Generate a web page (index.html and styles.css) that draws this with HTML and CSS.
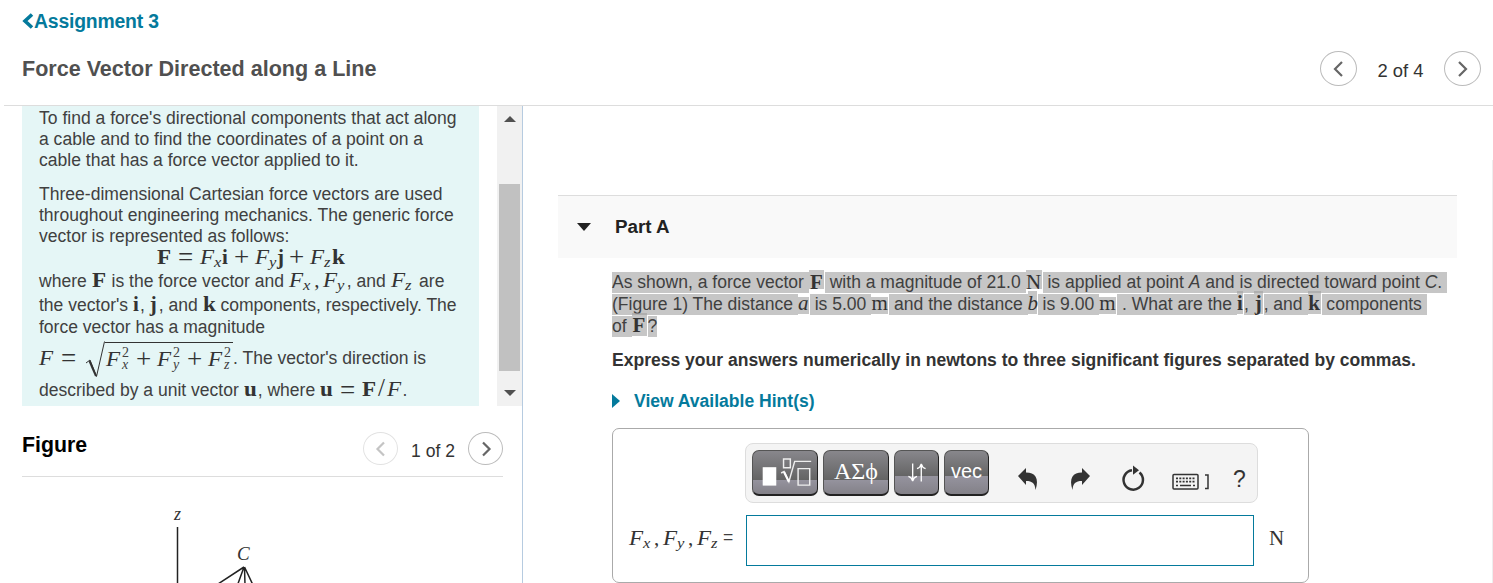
FILE: index.html
```html
<!DOCTYPE html>
<html lang="en">
<head>
  <meta charset="UTF-8">
  <meta name="viewport" content="width=device-width, initial-scale=1.0">
  <title>Force Vector Directed along a Line</title>
  <link rel="stylesheet" href="styles.css">
</head>
<body>

  <header class="top">
    <div class="top-titles">
      <a class="back" href="#"><svg width="12" height="16" viewBox="0 0 12 16"><path d="M10 1.500 3 8l7 6.500" fill="none" stroke="#047a9c" stroke-width="3.600"/></svg>Assignment 3</a>
      <h1>Force Vector Directed along a Line</h1>
    </div>
    <nav class="pager">
      <button class="round"><svg width="12" height="18" viewBox="0 0 12 18"><path d="M9 2 2 9l7 7"/></svg></button>
      <span>2 of 4</span>
      <button class="round"><svg width="12" height="18" viewBox="0 0 12 18"><path d="M2 2l7 7-7 7"/></svg></button>
    </nav>
  </header>

  <main>
    <section class="left">
      <div class="scroller">
        <div class="intro">
          <div class="line">To find a force's directional components that act along</div>
          <div class="line">a cable and to find the coordinates of a point on a</div>
          <div class="line gap">cable that has a force vector applied to it.</div>
          <div class="line">Three-dimensional Cartesian force vectors are used</div>
          <div class="line">throughout engineering mechanics. The generic force</div>
          <div class="line">vector is represented as follows:</div>
          <div class="line formula"><b class="m bf">F</b><span class="m op">=</span><i class="m fs">F<sub>x</sub></i><b class="m bi">i</b><span class="m op plus">+</span><i class="m fs">F<sub>y</sub></i><b class="m bi">j</b><span class="m op plus">+</span><i class="m fs">F<sub>z</sub></i><b class="m bk">k</b></div>
          <div class="line where">where <b class="m bf">F</b> is the force vector and <i class="m fs">F<sub>x</sub></i><span class="m comma">,</span><i class="m fs">F<sub>y</sub></i>, and <i class="m fs">F<sub>z</sub></i> are</div>
          <div class="line comps">the vector's <b class="m bi">i</b>, <b class="m bj">j</b>, and <b class="m bk">k</b> components, respectively. The</div>
          <div class="line">force vector has a magnitude</div>
          <div class="line root-line"><i class="m f">F</i><span class="m op">=</span><svg class="radical" width="20" height="38" viewBox="0 0 20 38"><path d="M1 22l4-3 6.500 16.500L19.500.500" fill="none" stroke="#333" stroke-width="1"/><path d="M4.500 20l6.500 15" stroke="#333" stroke-width="2"/></svg><span class="root"><i class="m f">F</i><span class="stack"><span>2</span><i>x</i></span><span class="m op plus">+</span><i class="m f">F</i><span class="stack"><span>2</span><i>y</i></span><span class="m op plus">+</span><i class="m f">F</i><span class="stack"><span>2</span><i>z</i></span></span><span class="rest">. The vector's direction is</span></div>
          <div class="line unit">described by a unit vector <b class="m bu">u</b>, where <b class="m bu">u</b><span class="m op">=</span><b class="m bf">F</b><span class="m slash">/</span><i class="m f">F</i>&#8202;.</div>
        </div>
        <div class="scrollbar">
          <span class="arrow up"></span>
          <span class="thumb"></span>
          <span class="arrow down"></span>
        </div>
      </div>

      <div class="figure-head">
        <h2>Figure</h2>
        <nav class="pager small">
          <button class="round off"><svg width="12" height="16" viewBox="0 0 12 16"><path d="M9 1.500 2.500 8 9 14.500"/></svg></button>
          <span>1 of 2</span>
          <button class="round"><svg width="12" height="16" viewBox="0 0 12 16"><path d="M3 1.500 9.500 8 3 14.500"/></svg></button>
        </nav>
      </div>
      <svg class="figure" width="481" height="106" viewBox="22 477 481 106">
        <text x="174" y="520" font-size="18">z</text>
        <text x="237" y="560" font-size="19">C</text>
        <g stroke="#222" stroke-width="1.500" fill="none">
          <path d="M177.500 527v60"/>
          <path d="M244 567l-26 17M244 567l-6.500 18M244.500 567l.5 18M244.500 567l8.500 18"/>
        </g>
      </svg>
    </section>

    <section class="right">
      <div class="part">
        <span class="toggle"></span>
        <h3>Part A</h3>
      </div>

      <div class="question">
        <div class="row"><span class="t">As shown, a force vector </span><b class="m q1 wf">F</b><span class="t"> with a magnitude of 21.0 </span><span class="m q1 wn">N</span><span class="t"> is applied at point <i>A</i> and is directed toward point <i>C</i>. </span></div>
        <div class="row"><span class="t">(Figure 1) The distance </span><i class="m q2 wa">a</i><span class="t"> is 5.00 </span><span class="m q2 wm">m</span><span class="t"> and the distance </span><i class="m q3 wb">b</i><span class="t"> is 9.00 </span><span class="m q2 wm">m</span><span class="t"> . What are the </span><b class="m q3 wi">i</b><span class="t">, </span><b class="m q3 wj">j</b><span class="t">, and </span><b class="m q3 wk">k</b><span class="t"> components </span></div>
        <div class="row"><span class="t">of </span><b class="m q3 wf">F</b><span class="t">?</span></div>
      </div>

      <p class="express">Express your answers numerically in newtons to three significant figures separated by commas.</p>
      <a class="hints" href="#"><span class="hint-arrow"></span>View Available Hint(s)</a>

      <div class="answer">
        <div class="toolbar">
          <button class="key"><svg width="66" height="46" viewBox="0 0 66 46"><path d="M10 17h14v19H10z" fill="#fff"/><g fill="none" stroke="#eee" stroke-width="1.500"><path d="M31.500 8.500h7v9h-7zM46.500 18.500h12v17h-12z"/><path d="M29 23l3-1.500 5 10.500L43 11h17"/></g><path d="M32 22l5 10" stroke="#fff" stroke-width="2.200"/></svg></button>
          <button class="key greek">ΑΣϕ</button>
          <button class="key narrow"><svg width="45" height="46" viewBox="0 0 45 46"><path d="M18.500 14v18M14 27.500q3.500 1 4.500 5 1-4 4.500-5M27.500 33V15M23 19.500q3.500-1 4.500-5 1 4 4.500 5" fill="none" stroke="#fff" stroke-width="1.400"/></svg></button>
          <button class="key narrow">vec</button>
          <svg class="tools" width="240" height="46" viewBox="1010 450 240 46" fill="#333">
            <path d="M1018 476l8-8v4.500c9 0 13.500 5.500 9.500 17.500-.5-6.500-3-9-9.500-9v4z"/>
            <path d="M1090 476l-8-8v4.500c-9 0-13.500 5.500-9.500 17.500.5-6.500 3-9 9.500-9v4z"/>
            <path d="M1139.500 472.500A9.700 9.700 0 1 1 1132 470.300" fill="none" stroke="#333" stroke-width="2.500"/>
            <path d="M1133 465.500l6 4.700-6 4.600z"/>
            <rect x="1173" y="474.500" width="25" height="14.500" rx="1" fill="none" stroke="#333" stroke-width="1.500"/>
            <path d="M1176 478.300h19M1176 481.700h19" stroke="#333" stroke-width="1.800" stroke-dasharray="2 1.300"/>
            <path d="M1176 485.500h2M1180 485.500h11M1193 485.500h2" stroke="#333" stroke-width="1.600"/>
            <path d="M1205 475h3v13.500h-3" fill="none" stroke="#333" stroke-width="1.500"/>
            <text x="1233" y="487" font-size="23">?</text>
          </svg>
        </div>
        <div class="entry">
          <label for="ans"><i class="m fs">F<sub>x</sub></i><span class="m comma">,</span><i class="m fs">F<sub>y</sub></i><span class="m comma">,</span><i class="m fs">F<sub>z</sub></i><span class="eq">=</span></label>
          <input id="ans" type="text">
          <span class="m newton">N</span>
        </div>
      </div>
    </section>
  </main>

</body>
</html>
```
FILE: styles.css
```css
*{
  box-sizing: border-box;
}

body{
  margin: 0;
  height: 583px;
  overflow: hidden;
  background-color: #fff;
  color: #404040;
  font-family: "Liberation Sans", Arial, sans-serif;
  font-size: 17.55px;
}

h1, h2, h3, p{
  margin: 0;
}

a{
  color: #047a9c;
  font-weight: bold;
  text-decoration: none;
}

button{
  padding: 0;
  font: inherit;
}

/* header */
.top{
  display: flex;
  justify-content: space-between;
  height: 106px;
  margin-left: 4px;
  padding: 0 12px 0 18px;
  border-bottom: 1px solid #ddd;
}

.top-titles{
  padding-top: 10px;
}

.back{
  display: flex;
  align-items: center;
  height: 23px;
  font-size: 19.4px;
  letter-spacing: -.2px;
}

.back svg{
  margin-top: -1px;
}

.top h1{
  margin-top: 23px;
  line-height: 25px;
  font-size: 21.55px;
  color: #505050;
}

.pager{
  display: flex;
  align-items: center;
  color: #333;
}

.top .pager{
  height: 35px;
  margin-top: 51px;
  font-size: 18.4px;
}

.top .pager span{
  width: 87px;
  padding-top: 5px;
  text-align: center;
}

.round{
  display: flex;
  align-items: center;
  justify-content: center;
  width: 37px;
  height: 35px;
  border: 1px solid #bbb;
  border-radius: 50%;
  background-color: #fff;
}

.round path{
  fill: none;
  stroke: #666;
  stroke-width: 2.2;
}

.round.off{
  border-color: #e2e2e2;
}

.round.off path{
  stroke: #c4c4c4;
}

main{
  display: flex;
  height: 477px;
}

/* math */
.m{
  display: inline-block;
  font-family: "Liberation Serif", "Times New Roman", serif;
  font-size: 21px;
  line-height: 20px;
  color: #333;
}

.m sub{
  position: relative;
  top: 3px;
  font-size: 15px;
  line-height: 0;
  vertical-align: baseline;
}

.f, .fs, .bf, .bk, .bu{
  transform: scaleX(1.1);
  transform-origin: left;
}

.f{ width: 14px; }
.fs{ width: 22px; }
.bf{ width: 15px; }
.bi{ width: 7px; }
.bj{ width: 9px; }
.bk{ width: 13px; }
.bu{ width: 14px; }

.comma{
  width: 11px;
  padding-left: 2px;
}

.op{
  width: 16px;
  margin: 0 6px;
  font-size: 27px;
}

.plus{
  margin: 0 5px;
}

/* left column */
.left{
  width: 523px;
  padding-left: 22px;
  border-right: 1px solid #b6cbe0;
}

.scroller{
  display: flex;
  justify-content: space-between;
  height: 300px;
}

.intro{
  width: 457px;
  padding: 2px 0 0 17px;
  background-color: #e5f6f6;
}

.line{
  height: 21px;
  line-height: 21px;
  white-space: nowrap;
}

.gap{
  margin-bottom: 13px;
}

.formula{
  display: flex;
  align-items: center;
  padding-left: 118px;
}

.formula .m{
  margin-top: -2px;
}

.where{
  height: 26px;
  line-height: 26px;
}

.where .fs{
  width: 23.5px;
}

.comps{
  height: 23px;
  line-height: 23px;
}

.root-line{
  display: flex;
  align-items: center;
  height: 40px;
}

.root-line > .op{
  margin: 0 8px;
}

.root{
  display: flex;
  align-items: center;
  height: 32px;
  padding-left: 1px;
  border-top: 1px solid #333;
}

.radical{
  margin-top: 4px;
}

.stack{
  display: flex;
  flex-direction: column;
  width: 11px;
  padding-left: 2px;
  font-family: "Liberation Serif", serif;
  font-size: 14px;
  line-height: 12px;
}

.stack > *{
  height: 12px;
}

.unit{
  height: 26px;
  line-height: 24px;
}

.unit .op{
  line-height: 1px;
  vertical-align: -3px;
}

.slash{
  width: 10px;
  padding-left: 1px;
  font-size: 25px;
}

.scrollbar{
  display: flex;
  flex-direction: column;
  align-items: center;
  width: 25px;
  padding: 10px 0;
  background-color: #f1f1f1;
}

.thumb{
  width: 21px;
  height: 187px;
  margin: 62px 0 19px;
  background-color: #c1c1c1;
}

.arrow{
  border: 6px solid transparent;
}

.up{
  border-top: 0;
  border-bottom-color: #505050;
}

.down{
  border-bottom: 0;
  border-top-color: #505050;
}

.figure-head{
  display: flex;
  justify-content: space-between;
  width: 481px;
  height: 71px;
  padding-top: 26px;
  border-bottom: 1px solid #ddd;
}

.figure-head h2{
  line-height: 27px;
  font-size: 21.3px;
  color: #000;
}

.small{
  height: 33px;
}

.small .round{
  width: 35px;
  height: 33px;
}

.small span{
  width: 70px;
  padding-top: 5px;
  text-align: center;
}

.figure{
  display: block;
}

.figure text{
  font-family: "Liberation Serif", serif;
  font-style: italic;
  fill: #333;
}

/* right column */
.right{
  flex: 1;
  margin-top: 54px;
  padding: 35px 0 0 35px;
  border-right: 1px solid #eee;
}

.part{
  display: flex;
  align-items: center;
  width: 899px;
  height: 63px;
  padding-left: 19px;
  border-top: 1px solid #ddd;
  background-color: #f9f9f9;
}

.part h3{
  margin-left: 24px;
  font-size: 18.8px;
  color: #222;
}

.toggle{
  border: 7px solid transparent;
  border-top: 8px solid #222;
  border-bottom: 0;
}

.question{
  margin: 14px 0 0 54px;
}

.row{
  display: flex;
  height: 22px;
  white-space: pre;
}

.t{
  height: 21px;
  line-height: 21px;
  background-color: rgba(160, 160, 160, .6);
}

.row .m{
  background-color: rgba(160, 160, 160, .6);
  margin-right: 1px;
  text-align: center;
}

.q1{ height: 19px; margin-top: -2px; line-height: 24px; }
.row .q2{ height: 17px; margin-top: 3px; line-height: 12px; }
.row .q3{ height: 23px; margin-top: -3px; line-height: 25px; }
.wf{ width: 15px; }
.wn{ width: 16px; }
.wa{ width: 11px; }
.wm{ width: 17px; }
.wb{ width: 9px; }
.wi{ width: 6px; }
.wj{ width: 9px; }
.wk{ width: 13px; }

.express{
  margin: 11px 0 0 54px;
  line-height: 22px;
  font-weight: bold;
  color: #333;
}

.hints{
  display: flex;
  align-items: center;
  height: 22px;
  margin: 19px 0 0 54px;
}

.hint-arrow{
  margin-right: 14px;
  border: 7px solid transparent;
  border-left: 8px solid #047a9c;
  border-right: 0;
}

.answer{
  width: 697px;
  height: 155px;
  margin: 16px 0 0 54px;
  padding: 14px 0 0 16px;
  border: 1px solid #aaa;
  border-radius: 7px;
}

.toolbar{
  display: flex;
  gap: 5px;
  width: 513px;
  height: 60px;
  margin-left: 116px;
  padding: 6px;
  border: 1px solid #ddd;
  border-radius: 8px;
  background-color: #f4f4f4;
}

.key{
  display: flex;
  align-items: center;
  justify-content: center;
  flex: none;
  width: 66px;
  height: 46px;
  border: 1px solid #555;
  border-right-color: #222;
  border-bottom: 2px solid #222;
  border-radius: 7px;
  background: linear-gradient(#88878c, #646464 67%, #95939e 67%, #838188);
  color: #fff;
}

.narrow{
  width: 45px;
  padding-bottom: 2px;
  background: linear-gradient(#88878c, #646464 59%, #95939e 59%, #838188);
  font-size: 20px;
}

.greek{
  padding-bottom: 2px;
  font-family: "Liberation Serif", serif;
  font-size: 24px;
}

.tools{
  flex: none;
  margin-left: 16px;
}

.entry{
  display: flex;
  align-items: center;
  margin-top: 12px;
}

.entry label{
  display: flex;
  align-items: center;
  width: 117px;
  margin-top: -6px;
}

.entry .fs{
  width: 23px;
}

.eq{
  margin-left: 3px;
}

.entry input{
  width: 508px;
  height: 51px;
  border: 1px solid #047a9c;
}

.newton{
  margin: -5px 0 0 15px;
}
```
